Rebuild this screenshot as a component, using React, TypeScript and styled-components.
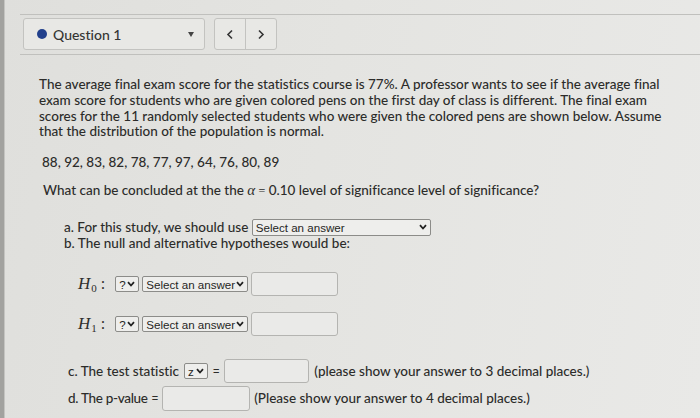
import React from 'react'
import styled, { createGlobalStyle } from 'styled-components'

const GlobalStyle = createGlobalStyle`
  html, body {
    margin: 0;
    padding: 0;
  }
  body {
    background: #e4e4e1;
    font-family: Lato, "Open Sans", sans-serif;
    font-variant-ligatures: none;
    color: #2c2c2a;
  }
`

const Chevron: React.FC = () => (
  <svg width="8" height="6" viewBox="0 0 8 6">
    <polyline points="1,1.2 4,4.5 7,1.2" fill="none" stroke="#222" strokeWidth="1.8" />
  </svg>
)

const Select: React.FC<{ w: number; h?: number; children?: React.ReactNode }> = ({ w, h = 16, children }) => (
  <SelectBox $w={w} $h={h}>
    <SelectText>{children}</SelectText>
    <Chevron />
  </SelectBox>
)

export default function App() {
  return (
    <>
      <GlobalStyle />
      <Page>
        <Edge />
        <Main>
          <Header>
            <QuestionPicker>
              <Dot />
              <QuestionLabel>Question 1</QuestionLabel>
              <Caret />
            </QuestionPicker>
            <NavGroup>
              <NavButton>
                <svg width="8" height="11" viewBox="0 0 8 11">
                  <polyline points="6,1.5 2,5.5 6,9.5" fill="none" stroke="#333" strokeWidth="1.6" />
                </svg>
              </NavButton>
              <NavButton>
                <svg width="8" height="11" viewBox="0 0 8 11">
                  <polyline points="2,1.5 6,5.5 2,9.5" fill="none" stroke="#333" strokeWidth="1.6" />
                </svg>
              </NavButton>
            </NavGroup>
          </Header>

          <Body>
            <Paragraph>
              The average final exam score for the statistics course is 77%. A professor wants to see if the average final
              <br />
              exam score for students who are given colored pens on the first day of class is different. The final exam
              <br />
              scores for the 11 randomly selected students who were given the colored pens are shown below. Assume
              <br />
              that the distribution of the population is normal.
            </Paragraph>
            <Data>88, 92, 83, 82, 78, 77, 97, 64, 76, 80, 89</Data>
            <Prompt>
              What can be concluded at the the <MathSym $italic>α</MathSym> <MathSym>=</MathSym> 0.10 level of significance level
              of significance?
            </Prompt>

            <Parts>
              <PartRow>
                a. For this study, we should use&nbsp;
                <Select w={179} h={17}>
                  Select an answer
                </Select>
              </PartRow>
              <PartRow>b. The null and alternative hypotheses would be:</PartRow>
            </Parts>

            <HypRow $top={21}>
              <MathH>
                H<sub>0</sub>
              </MathH>
              <Colon>:</Colon>
              <Select w={24}>?</Select>
              <Select w={106}>Select an answer</Select>
              <AnswerBox $w={87} />
            </HypRow>
            <HypRow $top={16}>
              <MathH>
                H<sub>1</sub>
              </MathH>
              <Colon>:</Colon>
              <Select w={24}>?</Select>
              <Select w={106}>Select an answer</Select>
              <AnswerBox $w={87} />
            </HypRow>

            <StepRow $top={23} $gap={5}>
              c. The test statistic
              <Select w={24}>z</Select>
              <Equals>=</Equals>
              <AnswerBox $w={85} />
              <Note>(please show your answer to 3 decimal places.)</Note>
            </StepRow>
            <StepRow $top={3} $gap={4}>
              <Tight>d. The p-value</Tight>
              <Equals>=</Equals>
              <AnswerBox $w={88} $h={25} />
              <Note>(Please show your answer to 4 decimal places.)</Note>
            </StepRow>
            <StepRow $top={5} $gap={5}>
              e. The p-value is
              <Select w={24}>?</Select>
              <MathSym $italic>α</MathSym>
            </StepRow>
          </Body>
        </Main>
      </Page>
    </>
  )
}

const Page = styled.div`
  display: flex;
  height: 418px;
  overflow: hidden;
  background: linear-gradient(100deg, #dfdfdc 0%, #e4e4e1 45%, #e9e9e7 100%);
`

const Edge = styled.div`
  width: 4px;
  flex: none;
  background: #a2a29f;
  border-right: 1px solid #c4c4c1;
`

const Main = styled.div`
  flex: 1;
  display: flex;
  flex-direction: column;
`

const Header = styled.div`
  display: flex;
  align-items: center;
  gap: 9px;
  margin: 14px 0 0 15px;
  padding: 3px 0 4px 3px;
  border-top: 1px solid #c0c0bd;
  border-bottom: 1px solid #c0c0bd;
`

const QuestionPicker = styled.div`
  display: flex;
  align-items: center;
  width: 182px;
  height: 32px;
  box-sizing: border-box;
  padding: 0 10px 0 13px;
  border: 1px solid #c3c3c0;
  border-radius: 3px;
  background: #e8e8e5;
`

const Dot = styled.span`
  width: 10px;
  height: 10px;
  border-radius: 50%;
  background: #22408c;
  margin-right: 6px;
`

const QuestionLabel = styled.span`
  flex: 1;
  font-size: 14px;
  font-weight: 500;
  color: #353533;
`

const Caret = styled.span`
  width: 0;
  height: 0;
  border-left: 3.5px solid transparent;
  border-right: 3.5px solid transparent;
  border-top: 5px solid #444;
`

const NavGroup = styled.div`
  display: flex;
  height: 32px;
  box-sizing: border-box;
  border: 1px solid #c3c3c0;
  border-radius: 3px;
  background: #e8e8e5;
`

const NavButton = styled.div`
  width: 30px;
  display: flex;
  align-items: center;
  justify-content: center;
  & + & {
    border-left: 1px solid #c3c3c0;
  }
`

const Body = styled.div`
  display: flex;
  flex-direction: column;
  align-items: flex-start;
  padding: 22px 0 0 34px;
  font-size: 13.5px;
  font-weight: 500;
`

const Paragraph = styled.div`
  line-height: 15.8px;
  white-space: nowrap;
`

const Data = styled.div`
  margin: 14px 0 0 3px;
  line-height: 16px;
`

const Prompt = styled.div`
  margin: 12px 0 0 4px;
  line-height: 16px;
  height: 16px;
  white-space: nowrap;
`

const MathSym = styled.span<{ $italic?: boolean }>`
  font-family: "Liberation Serif", serif;
  font-style: ${(p) => (p.$italic ? 'italic' : 'normal')};
  font-size: ${(p) => (p.$italic ? '15px' : '12px')};
  line-height: 1;
`

const Parts = styled.div`
  margin: 21px 0 0 25px;
`

const PartRow = styled.div`
  display: flex;
  align-items: center;
  height: 16px;
  white-space: pre;
`

const SelectBox = styled.span<{ $w: number; $h: number }>`
  display: inline-flex;
  align-items: center;
  box-sizing: border-box;
  width: ${(p) => p.$w}px;
  height: ${(p) => p.$h}px;
  padding: 0 3px 0 3px;
  border: 1px solid #8c8c89;
  border-radius: 2px;
  background: #eeeeec;
  font-family: "Liberation Sans", Arial, sans-serif;
  font-size: 11.6px;
  font-weight: 400;
  color: #262624;
  flex: none;
`

const SelectText = styled.span`
  flex: 1;
  overflow: hidden;
  white-space: nowrap;
`

const HypRow = styled.div<{ $top: number }>`
  display: flex;
  align-items: center;
  gap: 3px;
  height: 24px;
  margin: ${(p) => p.$top}px 0 0 39px;
`

const MathH = styled.span`
  font-family: "Liberation Serif", serif;
  font-style: italic;
  font-weight: 400;
  font-size: 17px;
  color: #2e2e2c;
  sub {
    font-style: normal;
    font-size: 11px;
    vertical-align: -3px;
    margin-left: 1px;
  }
`

const Colon = styled.span`
  font-family: "Liberation Serif", serif;
  font-weight: 400;
  font-size: 16px;
  margin: 0 7px 0 1px;
`

const AnswerBox = styled.span<{ $w: number; $h?: number }>`
  display: inline-block;
  flex: none;
  box-sizing: border-box;
  width: ${(p) => p.$w}px;
  height: ${(p) => p.$h || 24}px;
  border: 1px solid #b4b4b1;
  border-radius: 3px;
  background: #eaeae8;
`

const StepRow = styled.div<{ $top: number; $gap: number }>`
  display: flex;
  align-items: center;
  gap: ${(p) => p.$gap}px;
  height: 24px;
  margin: ${(p) => p.$top}px 0 0 29px;
  white-space: nowrap;
`

const Tight = styled.span`
  letter-spacing: -0.3px;
`

const Equals = styled.span`
  font-family: "Liberation Sans", sans-serif;
  font-weight: 400;
  font-size: 11px;
`

const Note = styled.span`
  margin-left: 0;
`
